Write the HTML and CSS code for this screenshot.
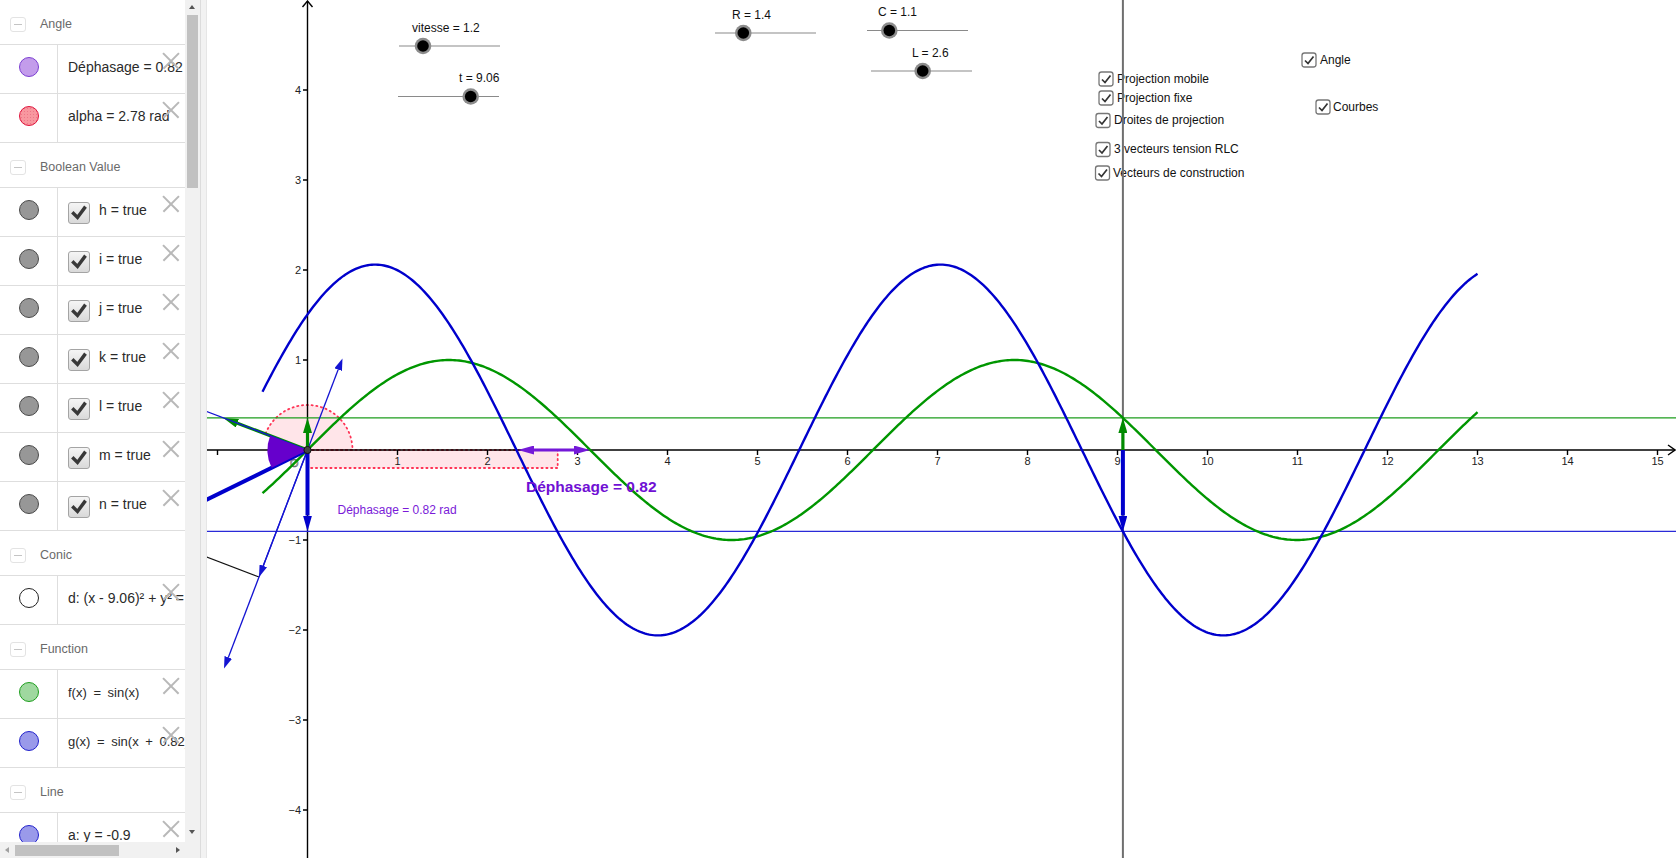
FILE: index.html
```html
<!DOCTYPE html>
<html lang="fr">
<head>
<meta charset="utf-8">
<title>RLC</title>
<link rel="stylesheet" href="styles.css">
</head>
<body>
<div class="app">
  <aside class="algebra">
    <div class="av-list">
      <div class="ghead"><span class="toggle"></span><span class="gname">Angle</span></div>
      <div class="item"><div class="mcell"><span class="marble m-purple"></span></div><div class="itext">Déphasage = 0.82 rad</div><span class="del"></span></div>
      <div class="item"><div class="mcell"><span class="marble m-pink"></span></div><div class="itext">alpha = 2.78 rad</div><span class="del"></span></div>

      <div class="ghead"><span class="toggle"></span><span class="gname">Boolean Value</span></div>
      <div class="item"><div class="mcell"><span class="marble m-gray"></span></div><div class="itext"><span class="cb"><svg viewBox="0 0 20 20" width="20" height="20"><path d="M4.5 10.5L8.5 14.5L15.5 5" /></svg></span>h = true</div><span class="del"></span></div>
      <div class="item"><div class="mcell"><span class="marble m-gray"></span></div><div class="itext"><span class="cb"><svg viewBox="0 0 20 20" width="20" height="20"><path d="M4.5 10.5L8.5 14.5L15.5 5" /></svg></span>i = true</div><span class="del"></span></div>
      <div class="item"><div class="mcell"><span class="marble m-gray"></span></div><div class="itext"><span class="cb"><svg viewBox="0 0 20 20" width="20" height="20"><path d="M4.5 10.5L8.5 14.5L15.5 5" /></svg></span>j = true</div><span class="del"></span></div>
      <div class="item"><div class="mcell"><span class="marble m-gray"></span></div><div class="itext"><span class="cb"><svg viewBox="0 0 20 20" width="20" height="20"><path d="M4.5 10.5L8.5 14.5L15.5 5" /></svg></span>k = true</div><span class="del"></span></div>
      <div class="item"><div class="mcell"><span class="marble m-gray"></span></div><div class="itext"><span class="cb"><svg viewBox="0 0 20 20" width="20" height="20"><path d="M4.5 10.5L8.5 14.5L15.5 5" /></svg></span>l = true</div><span class="del"></span></div>
      <div class="item"><div class="mcell"><span class="marble m-gray"></span></div><div class="itext"><span class="cb"><svg viewBox="0 0 20 20" width="20" height="20"><path d="M4.5 10.5L8.5 14.5L15.5 5" /></svg></span>m = true</div><span class="del"></span></div>
      <div class="item"><div class="mcell"><span class="marble m-gray"></span></div><div class="itext"><span class="cb"><svg viewBox="0 0 20 20" width="20" height="20"><path d="M4.5 10.5L8.5 14.5L15.5 5" /></svg></span>n = true</div><span class="del"></span></div>

      <div class="ghead"><span class="toggle"></span><span class="gname">Conic</span></div>
      <div class="item"><div class="mcell"><span class="marble m-white"></span></div><div class="itext">d: (x - 9.06)² + y² = 1</div><span class="del"></span></div>

      <div class="ghead"><span class="toggle"></span><span class="gname">Function</span></div>
      <div class="item"><div class="mcell"><span class="marble m-green"></span></div><div class="itext math">f(x) = sin(x)</div><span class="del"></span></div>
      <div class="item"><div class="mcell"><span class="marble m-blue"></span></div><div class="itext math">g(x) = sin(x + 0.82) · 2.06</div><span class="del"></span></div>

      <div class="ghead"><span class="toggle"></span><span class="gname">Line</span></div>
      <div class="item"><div class="mcell"><span class="marble m-blue"></span></div><div class="itext">a: y = -0.9</div><span class="del"></span></div>
    </div>
    <div class="vscroll">
      <span class="arr arr-up"></span>
      <span class="vthumb"></span>
      <span class="vfill"></span>
      <span class="arr arr-down"></span>
    </div>
    <div class="hscroll">
      <span class="arr arr-left"></span>
      <span class="hthumb"></span>
      <span class="hfill"></span>
      <span class="arr arr-right"></span>
    </div>
    <div class="corner"></div>
  </aside>
  <div class="splitter"></div>
  <main class="graphics">
    <svg class="plot" width="1469" height="858" viewBox="207 0 1469 858">
      <defs>
        <marker id="mg" viewBox="0 0 15 9" refX="0" refY="4.5" markerWidth="15" markerHeight="9" markerUnits="userSpaceOnUse" orient="auto"><path d="M0 0L15 4.5L0 9z" fill="#008a00"/></marker>
        <marker id="mb" viewBox="0 0 16 9" refX="0" refY="4.5" markerWidth="16" markerHeight="9" markerUnits="userSpaceOnUse" orient="auto"><path d="M0 0L16 4.5L0 9z" fill="#0000cc"/></marker>
        <marker id="mbt" viewBox="0 0 12 8" refX="0" refY="4" markerWidth="12" markerHeight="8" markerUnits="userSpaceOnUse" orient="auto"><path d="M0 0L12 4L0 8z" fill="#1414d2"/></marker>
        <marker id="mp" viewBox="0 0 16 9" refX="0" refY="4.5" markerWidth="16" markerHeight="9" markerUnits="userSpaceOnUse" orient="auto-start-reverse"><path d="M0 0L16 4.5L0 9z" fill="#7419d8"/></marker>
      </defs>

      <!-- alpha rectangle and sector -->
      <rect class="pink" x="307.5" y="450" width="250.2" height="18"/>
      <path class="pink" d="M307.5 450L352.5 450A45 45 0 0 0 265.46 433.94Z"/>

      <!-- axes -->
      <g class="axis">
        <line x1="207" y1="450" x2="1675" y2="450"/>
        <polyline points="1668,445 1675,450 1668,455" fill="none"/>
        <line x1="307.5" y1="858" x2="307.5" y2="1"/>
        <polyline points="302.5,7 307.5,1 312.5,7" fill="none"/>
        <path d="M217.5 450v5M397.5 450v5M487.5 450v5M577.5 450v5M667.5 450v5M757.5 450v5M847.5 450v5M937.5 450v5M1027.5 450v5M1117.5 450v5M1207.5 450v5M1297.5 450v5M1387.5 450v5M1477.5 450v5M1567.5 450v5M1657.5 450v5"/>
        <path d="M303 90h4.5M303 180h4.5M303 270h4.5M303 360h4.5M303 540h4.5M303 630h4.5M303 720h4.5M303 810h4.5"/>
      </g>
      <g class="ticklabels xl">
        <text x="397.5" y="465">1</text><text x="487.5" y="465">2</text><text x="577.5" y="465">3</text>
        <text x="667.5" y="465">4</text><text x="757.5" y="465">5</text><text x="847.5" y="465">6</text>
        <text x="937.5" y="465">7</text><text x="1027.5" y="465">8</text><text x="1117.5" y="465">9</text>
        <text x="1207.5" y="465">10</text><text x="1297.5" y="465">11</text><text x="1387.5" y="465">12</text>
        <text x="1477.5" y="465">13</text><text x="1567.5" y="465">14</text><text x="1657.5" y="465">15</text>
      </g>
      <g class="ticklabels yl">
        <text x="301" y="94">4</text><text x="301" y="184">3</text><text x="301" y="274">2</text><text x="301" y="364">1</text>
        <text x="301" y="544">−1</text><text x="301" y="634">−2</text><text x="301" y="724">−3</text><text x="301" y="814">−4</text>
      </g>
      <text class="olabel" x="290" y="467">O</text>

      <!-- sliders -->
      <g class="slider">
        <line x1="399" y1="46" x2="500" y2="46"/><circle class="ring" cx="423" cy="46" r="8.3"/><circle class="knob" cx="423" cy="46" r="5.8"/>
        <text x="412" y="31.5">vitesse = 1.2</text>
        <line x1="398" y1="96.5" x2="499" y2="96.5"/><circle class="ring" cx="470.7" cy="96.5" r="8.3"/><circle class="knob" cx="470.7" cy="96.5" r="5.8"/>
        <text x="459" y="81.5">t = 9.06</text>
        <line x1="715" y1="33" x2="816" y2="33"/><circle class="ring" cx="743.3" cy="33" r="8.3"/><circle class="knob" cx="743.3" cy="33" r="5.8"/>
        <text x="732" y="18.5">R = 1.4</text>
        <line x1="867" y1="30.5" x2="968" y2="30.5"/><circle class="ring" cx="889.3" cy="30.5" r="8.3"/><circle class="knob" cx="889.3" cy="30.5" r="5.8"/>
        <text x="878" y="15.5">C = 1.1</text>
        <line x1="871" y1="71" x2="972" y2="71"/><circle class="ring" cx="922.7" cy="71" r="8.3"/><circle class="knob" cx="922.7" cy="71" r="5.8"/>
        <text x="912" y="56.5">L = 2.6</text>
      </g>

      <!-- checkboxes -->
      <g class="gcb">
        <rect x="1302" y="53" width="14" height="14" rx="2.5"/><path d="M1305 60.5l3 3 5.5-7"/><text x="1320" y="63.5">Angle</text>
        <rect x="1099" y="72" width="14" height="14" rx="2.5"/><path d="M1102 79.5l3 3 5.5-7"/><text x="1117" y="82.5">Projection mobile</text>
        <rect x="1099" y="91" width="14" height="14" rx="2.5"/><path d="M1102 98.5l3 3 5.5-7"/><text x="1117" y="101.5">Projection fixe</text>
        <rect x="1316" y="100" width="14" height="14" rx="2.5"/><path d="M1319 107.5l3 3 5.5-7"/><text x="1333" y="110.5">Courbes</text>
        <rect x="1096" y="113.5" width="14" height="14" rx="2.5"/><path d="M1099 121l3 3 5.5-7"/><text x="1114" y="124">Droites de projection</text>
        <rect x="1096" y="142.5" width="14" height="14" rx="2.5"/><path d="M1099 150l3 3 5.5-7"/><text x="1114" y="153">3 vecteurs tension RLC</text>
        <rect x="1095.5" y="166" width="14" height="14" rx="2.5"/><path d="M1098.5 173.5l3 3 5.5-7"/><text x="1113" y="176.5">Vecteurs de construction</text>
      </g>

      <!-- projection lines -->
      <line class="hline-g" x1="207" y1="417.9" x2="1676" y2="417.9"/>
      <line class="hline-b" x1="207" y1="531.4" x2="1676" y2="531.4"/>
      <line class="vline" x1="1122.9" y1="0" x2="1122.9" y2="858"/>

      <!-- curves -->
      <path id="curve-f" class="curve-f" d=""/>
      <path id="curve-g" class="curve-g" d=""/>

      <!-- phasors -->
      <line class="vec-black" x1="259" y1="577" x2="141.3" y2="532"/>
      <line class="vec-b-thick" x1="307.5" y1="450" x2="141.3" y2="532"/>
      <line class="vec-g-thick" x1="307.5" y1="450" x2="237.4" y2="423.25" marker-end="url(#mg)"/>
      <line class="vec-b-thin" x1="307.5" y1="450" x2="189.8" y2="405"/>
      <line class="vec-b-thin" x1="307.5" y1="450" x2="228.3" y2="657.4" marker-end="url(#mbt)"/>
      <line class="vec-b-thin" x1="307.5" y1="450" x2="263.3" y2="565.8" marker-end="url(#mbt)"/>
      <line class="vec-b-thin" x1="307.5" y1="450" x2="338.2" y2="369.6" marker-end="url(#mbt)"/>

      <!-- angle wedge -->
      <path class="wedge" d="M307.5 450L270.13 435.73A40 40 0 0 0 271.62 467.7Z"/>

      <!-- projections -->
      <line class="vec-g-thick" x1="307.5" y1="450" x2="307.5" y2="432.9" marker-end="url(#mg)"/>
      <line class="vec-b-thick" x1="307.5" y1="450" x2="307.5" y2="515.5" marker-end="url(#mb)"/>
      <line class="vec-g-thick" x1="1122.9" y1="450" x2="1122.9" y2="432.9" marker-end="url(#mg)"/>
      <line class="vec-b-thick" x1="1122.9" y1="450" x2="1122.9" y2="515.5" marker-end="url(#mb)"/>

      <!-- phase double arrow -->
      <line class="parrow" x1="534" y1="450" x2="574" y2="450" marker-start="url(#mp)" marker-end="url(#mp)"/>

      <circle class="opoint" cx="307.5" cy="450" r="3.6"/>

      <text class="ph-big" x="526" y="492">Déphasage = 0.82</text>
      <text class="ph-small" x="337.5" y="514">Déphasage = 0.82 rad</text>
    </svg>
  </main>
</div>
<script src="script.js"></script>
</body>
</html>
```

FILE: styles.css
```css
* { box-sizing: border-box; }
html, body { margin: 0; padding: 0; }
body {
  width: 1676px;
  height: 858px;
  overflow: hidden;
  background: #fff;
  font-family: "Liberation Sans", Arial, sans-serif;
}
.app { display: flex; width: 1676px; height: 858px; }

/* ---------- algebra view ---------- */
.algebra {
  flex: none;
  width: 200px;
  height: 858px;
  display: grid;
  grid-template-columns: 185px 15px;
  grid-template-rows: 842px 16px;
  background: #fff;
}
.av-list { overflow: hidden; width: 185px; }
.ghead {
  height: 45px;
  border-bottom: 1px solid #dedede;
  display: flex;
  align-items: center;
  gap: 14px;
  padding: 4px 0 0 10px;
  color: #6a6a6a;
  font-size: 12.5px;
}
.toggle {
  position: relative;
  width: 16px;
  height: 15px;
  border: 1px solid #e3e3e3;
  border-radius: 3px;
}
.toggle::after {
  content: "";
  position: absolute;
  left: 3px; right: 3px; top: 6px;
  height: 1.5px;
  background: #c4c4c4;
}
.item {
  position: relative;
  height: 49px;
  border-bottom: 1px solid #dedede;
  display: flex;
}
.mcell {
  flex: none;
  width: 58px;
  border-right: 1px solid #dedede;
  display: flex;
  align-items: center;
  justify-content: center;
  padding-bottom: 4px;
}
.marble {
  width: 20px;
  height: 20px;
  border-radius: 50%;
  border: 1.5px solid #444;
}
.m-purple { background: #c39ceb; border-color: #7c3fd2; }
.m-pink { background: radial-gradient(circle, #ec7888 0.4px, transparent 0.8px) 0 0 / 3px 3px, #f8979f; border-color: #e0143c; }
.m-gray { background: #979797; border-color: #4a4a4a; }
.m-white { background: #fff; border-color: #222; }
.m-green { background: #9fd89f; border-color: #1f9f1f; }
.m-blue { background: #9a9aea; border-color: #2222cc; }
.itext {
  display: flex;
  align-items: center;
  padding: 0 0 4px 10px;
  white-space: nowrap;
  font-size: 14px;
  color: #2a2a2a;
}
.itext.math { font-size: 13px; word-spacing: 3px; }
.cb {
  flex: none;
  width: 22px;
  height: 22px;
  margin: 5px 9px 0 0;
  border: 1px solid #a4a4a4;
  border-radius: 3px;
  background: linear-gradient(#f5f5f5, #d9d9d9);
  display: flex;
  align-items: center;
  justify-content: center;
}
.cb svg path { fill: none; stroke: #383838; stroke-width: 3.4; stroke-linecap: square; }
.del {
  position: absolute;
  left: 163px;
  top: 8px;
  width: 16px;
  height: 16px;
}
.del::before, .del::after {
  content: "";
  position: absolute;
  left: -3px;
  top: 7.25px;
  width: 22px;
  height: 1.5px;
  background: #b8b8b8;
  transform: rotate(45deg);
}
.del::after { transform: rotate(-45deg); }

/* scrollbars */
.vscroll {
  background: #f1f1f1;
  display: flex;
  flex-direction: column;
  align-items: center;
}
.vthumb {
  width: 11px;
  height: 173px;
  background: #c1c1c1;
}
.vfill { flex: 1; }
.hscroll {
  background: #f1f1f1;
  display: flex;
  align-items: center;
}
.hthumb {
  width: 104px;
  height: 11px;
  background: #c1c1c1;
}
.hfill { flex: 1; }
.corner { background: #f1f1f1; }
.arr { flex: none; width: 15px; height: 15px; position: relative; }
.arr::after { content: ""; position: absolute; width: 0; height: 0; }
.arr-up::after { left: 4px; top: 5px; border-left: 3.5px solid transparent; border-right: 3.5px solid transparent; border-bottom: 4px solid #555; }
.arr-down::after { left: 4px; top: 3px; border-left: 3.5px solid transparent; border-right: 3.5px solid transparent; border-top: 4px solid #555; }
.arr-left::after { left: 5px; top: 4px; border-top: 3.5px solid transparent; border-bottom: 3.5px solid transparent; border-right: 4px solid #a0a0a0; }
.arr-right::after { left: 6px; top: 4px; border-top: 3.5px solid transparent; border-bottom: 3.5px solid transparent; border-left: 4px solid #555; }

.splitter {
  flex: none;
  width: 7px;
  height: 858px;
  background: #f2f2f2;
  border-left: 1px solid #dcdcdc;
  border-right: 1px solid #e6e6e6;
}

/* ---------- graphics view ---------- */
.graphics {
  flex: 1;
  height: 858px;
  overflow: hidden;
  background: #fff;
}
.plot { display: block; font-family: "Liberation Sans", Arial, sans-serif; }
.axis line, .axis path, .axis polyline { stroke: #000; stroke-width: 1.4; }
.ticklabels text { font-size: 11px; fill: #222; }
.xl text { text-anchor: middle; }
.yl text { text-anchor: end; }
.olabel { font-size: 11px; fill: none; stroke: #555; stroke-width: 0.6; }

.pink { fill: rgba(255, 0, 40, 0.1); stroke: #ff3355; stroke-width: 1.8; stroke-dasharray: 1.2 3.6; stroke-linecap: round; }

.slider line { stroke: #8a8a8a; stroke-width: 1.2; }
.slider .ring { fill: #8c8c8c; }
.slider .knob { fill: #000; }
.slider text { font-size: 12px; fill: #111; }

.gcb rect { fill: #fff; stroke: #777; stroke-width: 1.3; }
.gcb path { fill: none; stroke: #333; stroke-width: 1.7; }
.gcb text { font-size: 12px; fill: #111; }

.hline-g { stroke: #1d9d1d; stroke-width: 1.4; }
.hline-b { stroke: #2a2ad8; stroke-width: 1.4; }
.vline { stroke: #6f6f6f; stroke-width: 2; }

.curve-f { fill: none; stroke: #009600; stroke-width: 2.4; }
.curve-g { fill: none; stroke: #0000cc; stroke-width: 2.4; }

.vec-black { stroke: #111; stroke-width: 1.2; }
.vec-b-thick { stroke: #0000cc; stroke-width: 4; }
.vec-g-thick { stroke: #008a00; stroke-width: 3.2; }
.vec-b-thin { stroke: #1414d2; stroke-width: 1.3; }
.wedge { fill: #6600cc; }
.parrow { stroke: #7419d8; stroke-width: 3; }
.opoint { fill: #444; stroke: #111; stroke-width: 1; }

.ph-big { font-size: 15.5px; font-weight: bold; fill: #7010d4; word-spacing: 0; }
.ph-small { font-size: 12px; fill: #7a1ad8; }
```

FILE: script.js
```js
(function () {
  var ox = 307.5, oy = 450, u = 90;
  function sinePath(A, phi, x0, x1) {
    var n = 600, d = "";
    for (var i = 0; i <= n; i++) {
      var x = x0 + (x1 - x0) * i / n;
      var px = ox + x * u;
      var py = oy - A * Math.sin(x + phi) * u;
      d += (i ? "L" : "M") + px.toFixed(2) + " " + py.toFixed(2);
    }
    return d;
  }
  document.getElementById("curve-f").setAttribute("d", sinePath(1, 0, -0.5, 13));
  document.getElementById("curve-g").setAttribute("d", sinePath(2.06, 0.82, -0.5, 13));
})();
```
